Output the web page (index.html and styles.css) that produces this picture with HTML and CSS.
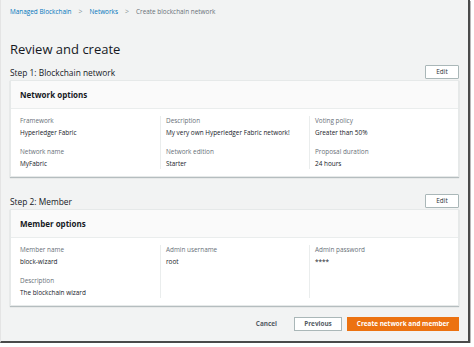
FILE: index.html
```html
<!DOCTYPE html>
<html lang="en">
<head>
<meta charset="utf-8">
<title>Review and create</title>
<link rel="stylesheet" href="styles.css">
</head>
<body>
<div class="window">
  <nav class="crumbs">
    <a class="crumb-link">Managed Blockchain</a>
    <span class="sep">&gt;</span>
    <a class="crumb-link">Networks</a>
    <span class="sep">&gt;</span>
    <span class="crumb-current">Create blockchain network</span>
  </nav>

  <h1 class="title">Review and create</h1>

  <section class="step step-first">
    <div class="step-head">
      <h2 class="step-title">Step 1: Blockchain network</h2>
      <button class="btn btn-edit">Edit</button>
    </div>
    <div class="card">
      <div class="card-head">Network options</div>
      <div class="card-body">
        <div class="col">
          <div class="field"><div class="label">Framework</div><div class="value">Hyperledger Fabric</div></div>
          <div class="field"><div class="label">Network name</div><div class="value">MyFabric</div></div>
        </div>
        <div class="col col-div">
          <div class="field"><div class="label">Description</div><div class="value">My very own Hyperledger Fabric network!</div></div>
          <div class="field"><div class="label">Network edition</div><div class="value">Starter</div></div>
        </div>
        <div class="col col-div">
          <div class="field"><div class="label">Voting policy</div><div class="value">Greater than 50%</div></div>
          <div class="field"><div class="label">Proposal duration</div><div class="value">24 hours</div></div>
        </div>
      </div>
    </div>
  </section>

  <section class="step step-second">
    <div class="step-head">
      <h2 class="step-title">Step 2: Member</h2>
      <button class="btn btn-edit">Edit</button>
    </div>
    <div class="card">
      <div class="card-head">Member options</div>
      <div class="card-body">
        <div class="col">
          <div class="field"><div class="label">Member name</div><div class="value">block-wizard</div></div>
          <div class="field"><div class="label">Description</div><div class="value">The blockchain wizard</div></div>
        </div>
        <div class="col col-div">
          <div class="field"><div class="label">Admin username</div><div class="value">root</div></div>
        </div>
        <div class="col col-div">
          <div class="field"><div class="label">Admin password</div><div class="value">****</div></div>
        </div>
      </div>
    </div>
  </section>

  <div class="actions">
    <button class="btn btn-link">Cancel</button>
    <button class="btn btn-normal">Previous</button>
    <button class="btn btn-primary">Create network and member</button>
  </div>
</div>
</body>
</html>
```

FILE: styles.css
```css
* { box-sizing: border-box; }
html, body { margin: 0; padding: 0; background: #ffffff; }
body { font-family: "Open Sans", "Noto Sans", sans-serif; color: #16191f; }

.window {
  width: 470px;
  height: 343px;
  background: #f2f3f3;
  border-left: 1px solid #e4e4e4;
  border-right: 2px solid #4a4a4a;
  border-bottom: 2px solid #4a4a4a;
  box-shadow: 1px 1px 0 #b8b8b8;
  padding: 0 9px 0 9px;
  display: flex;
  flex-direction: column;
}

.crumbs {
  display: flex;
  align-items: center;
  gap: 7px;
  font-size: 6.4px;
  height: 23px;
  padding-bottom: 1px;
}
.crumb-link { color: #0073bb; }
.crumb-current { color: #687078; }
.sep { color: #879596; font-size: 7px; }

.title {
  margin: 16px 0 0 0;
  font-size: 13px;
  font-weight: 400;
  line-height: 20px;
  color: #16191f;
}

.step-first { margin-top: 4px; }
.step-second { margin-top: 15px; }

.step-head {
  display: flex;
  align-items: flex-end;
  justify-content: space-between;
  height: 16px;
  margin-bottom: 1px;
}
.step-title {
  margin: 0;
  font-size: 8.4px;
  line-height: 12px;
  font-weight: 400;
  color: #16191f;
}

.btn {
  font-family: inherit;
  font-size: 6.4px;
  line-height: 1;
  cursor: pointer;
}
.btn-edit {
  width: 34px;
  height: 14px;
  padding: 0;
  background: #ffffff;
  border: 1px solid #aab7b8;
  color: #2a2f36;
  border-radius: 1px;
  font-size: 6.4px;
}

.card {
  background: #ffffff;
  border: 1px solid #e6e9e9;
  box-shadow: 0 1px 1px rgba(0, 28, 36, 0.25);
}
.card-head {
  height: 28px;
  display: flex;
  align-items: center;
  padding-left: 9px;
  background: #fafafa;
  border-bottom: 1px solid #eaeded;
  font-size: 8px;
  font-weight: 700;
  color: #16191f;
}
.card-body {
  display: grid;
  grid-template-columns: repeat(3, 1fr);
  padding: 7px 0 7px 0;
}
.col { padding-left: 9px; display: flex; flex-direction: column; gap: 9px; }
.col-div { border-left: 1px solid #eaeded; padding-left: 5px; }

.field { display: flex; flex-direction: column; gap: 2px; }
.label { font-size: 6.4px; line-height: 10px; color: #687078; }
.value { font-size: 6.4px; line-height: 10px; color: #16191f; font-weight: 500; }

.actions {
  display: flex;
  justify-content: flex-end;
  align-items: center;
  gap: 5px;
  margin-top: 11px;
}
.btn-link {
  background: none;
  border: none;
  color: #545b64;
  font-weight: 700;
  padding: 0 12px;
  height: 14px;
}
.btn-normal {
  width: 48px;
  height: 14px;
  background: #ffffff;
  border: 1px solid #aab7b8;
  color: #545b64;
  font-weight: 700;
  padding: 0;
}
.btn-primary {
  width: 112px;
  height: 14px;
  background: #ec7211;
  border: 1px solid #ec7211;
  color: #ffffff;
  font-weight: 700;
  padding: 0;
}
```
